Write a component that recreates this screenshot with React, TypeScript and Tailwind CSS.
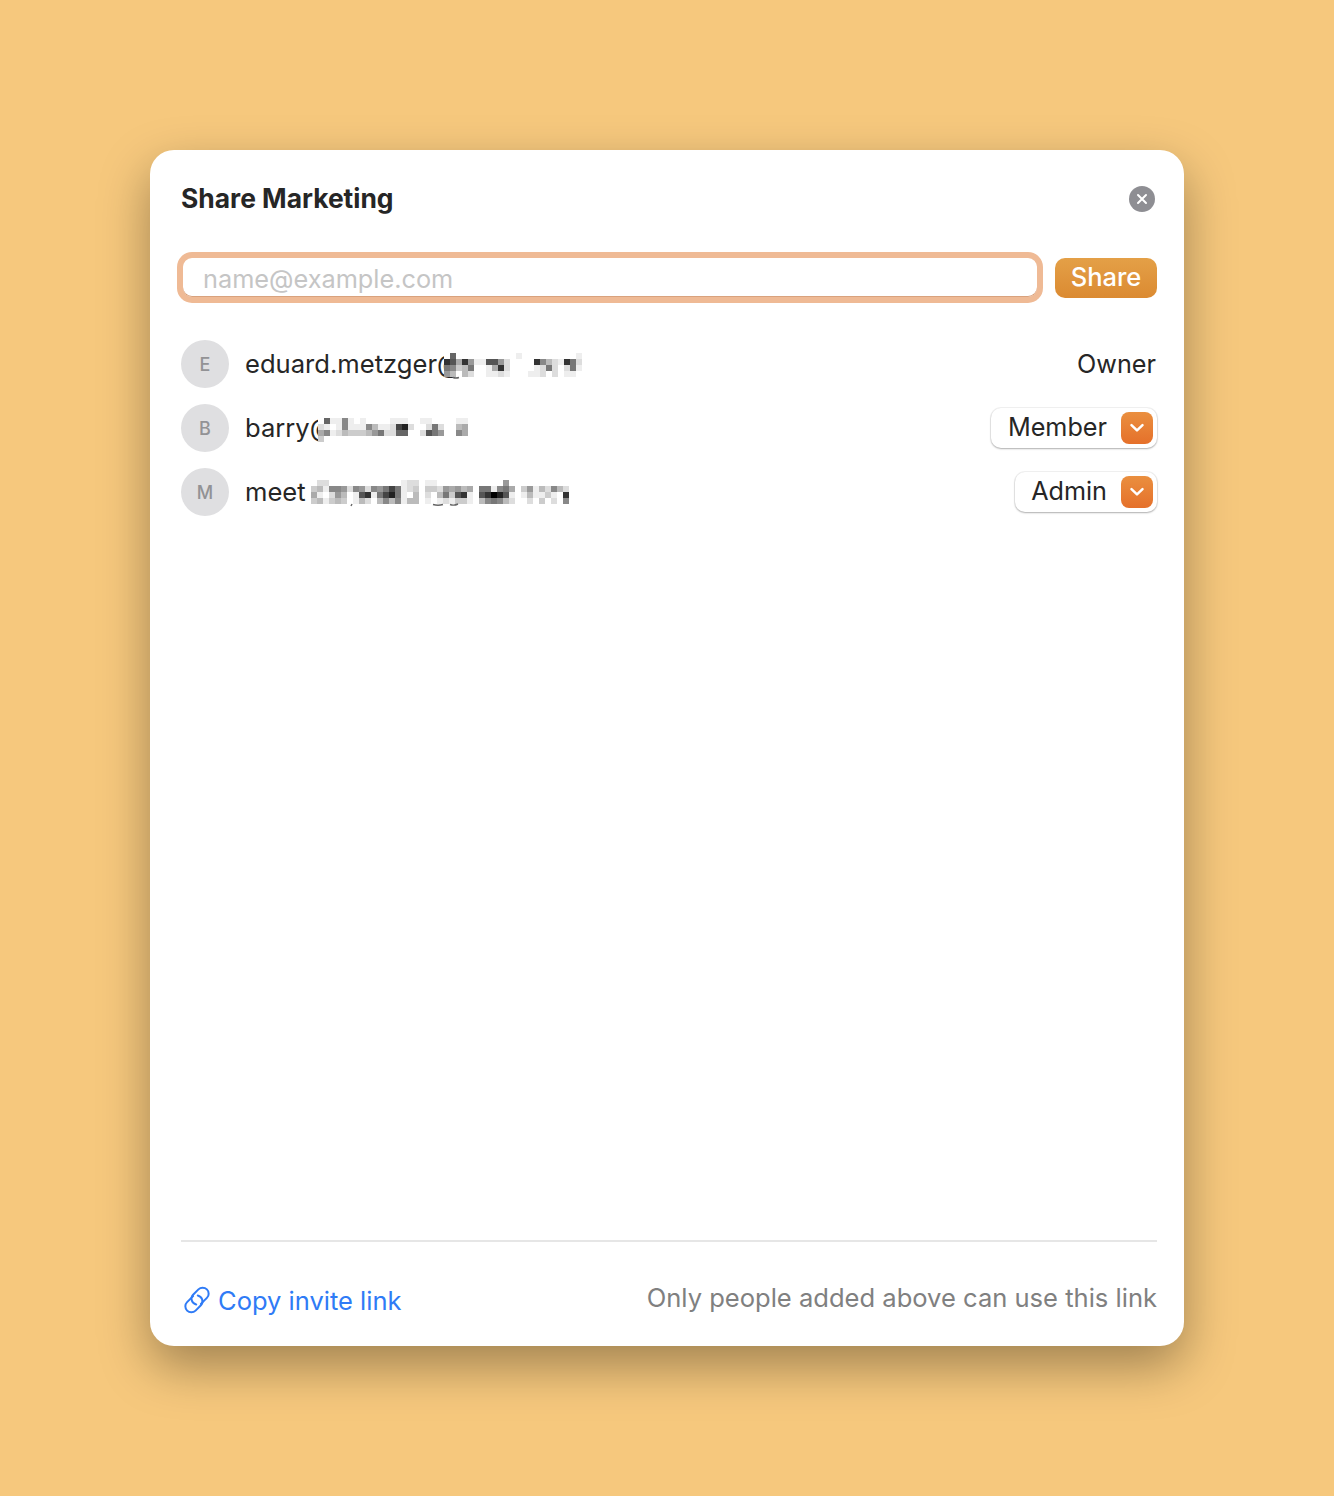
const font = "font-['Inter',sans-serif]";

function Mosaic({ rows, arcs }: { rows: string[]; arcs?: string }) {
  const cols = rows[0].length;
  return (
    <svg width={cols * 6} height={rows.length * 6 + 6} className="overflow-visible" shapeRendering="crispEdges">
      {rows.map((row, y) =>
        row.split("").map((c, x) => {
          const v = parseInt(c, 16) * 17;
          return <rect key={`${x}-${y}`} x={x * 6} y={y * 6} width="6.2" height="6.2" fill={`rgb(${v},${v},${v})`} />;
        }),
      )}
      {arcs ? <path d={arcs} fill="none" stroke="#666" strokeWidth="1.4" shapeRendering="auto" /> : null}
    </svg>
  );
}

function Avatar({ letter }: { letter: string }) {
  return (
    <div className="flex h-12 w-12 shrink-0 items-center justify-center rounded-full bg-[#dfdfe1] text-[18px] font-medium text-[#929295]">
      {letter}
    </div>
  );
}

function Select({ label }: { label: string }) {
  return (
    <div className="flex h-10 items-center rounded-[10px] bg-white pl-[16.6px] pr-[4px] text-[25.2px] text-[#262626] shadow-[0_0_0_1px_rgba(0,0,0,0.05),0_1px_2px_rgba(0,0,0,0.28)]">
      <span>{label}</span>
      <span className="ml-[14px] flex h-8 w-8 items-center justify-center rounded-lg bg-gradient-to-b from-[#ea8f3f] to-[#e5702a]">
        <svg width="16" height="16" viewBox="0 0 16 16" fill="none" stroke="white" strokeWidth="2.5" strokeLinecap="round" strokeLinejoin="round">
          <path d="M2.5 5.2 L8 10.4 L13.5 5.2" />
        </svg>
      </span>
    </div>
  );
}

function Row({
  letter,
  email,
  mosaic,
  children,
}: {
  letter: string;
  email: string;
  mosaic: React.ReactNode;
  children: React.ReactNode;
}) {
  return (
    <div className="relative flex h-16 items-center justify-between">
      <div className="flex items-center gap-4">
        <Avatar letter={letter} />
        <span className="text-[25.6px] text-[#262626]">{email}</span>
      </div>
      {mosaic}
      {children}
    </div>
  );
}

export default function App() {
  return (
    <div className={`${font} flex min-h-[1496px] items-start justify-center bg-[#f6c87d] pt-[150px]`}>
      <div className="flex h-[1196px] w-[1034px] flex-col rounded-[24px] bg-white pl-[31px] pr-[27px] shadow-[0_20px_50px_rgba(0,0,0,0.35)]">
        <div className="flex h-[98px] items-center justify-between pr-[2px]">
          <h1 className="text-[26.4px] font-bold text-[#262626]">Share Marketing</h1>
          <button className="flex h-[26px] w-[26px] items-center justify-center rounded-full bg-[#8e8e93]">
            <svg width="12" height="12" viewBox="0 0 12 12" stroke="white" strokeWidth="2" strokeLinecap="round">
              <path d="M2 2 L10 10 M10 2 L2 10" />
            </svg>
          </button>
        </div>
        <div className="mt-[10px] flex items-start gap-[18px]">
          <input
            placeholder="name@example.com"
            className="ml-[2px] h-[39px] flex-1 rounded-[9px] bg-white pl-[20px] pt-[1px] text-[25.3px] text-[#262626] shadow-[0_0_0_6px_#efba95,inset_0_-1px_0_#d9a27d] outline-none placeholder:text-[#c5c5c5]"
          />
          <button className="flex h-10 w-[102px] items-center justify-center rounded-[10px] bg-gradient-to-b from-[#e4a047] to-[#db8a31] pb-[2px] text-[25.5px] font-medium text-white">
            Share
          </button>
        </div>
        <div className="mt-[34px] flex flex-col">
          <Row
            letter="E"
            email="eduard.metzger@"
            mosaic={
              <div className="absolute left-[263px] top-[21px]">
                <Mosaic
                  arcs="M9 24.5 Q12 25.5 15 24.5"
                  rows={[
                    "f6ffffffffffefffffffffe".slice(0, 23),
                    "35a39ee559dffff38bde37d",
                    "78cb7ffea3dffffed7dfd7e",
                    "9bfbdffeedefffeedfdfeef",
                  ]}
                />
              </div>
            }
          >
            <span className="pl-[2px] pr-[1px] pt-[2px] text-[25.2px] text-[#262626]">Owner</span>
          </Row>
          <Row
            letter="B"
            email="barry@"
            mosaic={
              <div className="absolute left-[137px] top-[22px]">
                <Mosaic
                  rows={[
                    "f6ee8efeffffeeeffeeffffee",
                    "defe8eee8beed42dffd7dffba",
                    "a8edbcccb97dd66ffd579ff8a",
                    "cffffffffffffffffffffffff",
                  ]}
                />
              </div>
            }
          >
            <Select label="Member" />
          </Row>
          <Row
            letter="M"
            email="meet"
            mosaic={
              <div className="absolute left-[130px] top-[20px]">
                <Mosaic
                  arcs="M41 24 L40 26 M122 24.5 Q127 26 132 24.5 M139 24.5 Q143 26 147 24"
                  rows={[
                    "fddffffffffffffeddfeefffffffffff9ffffffffff",
                    "cbe889d89d89747edcfccd9a9baf77e87afc9ebd8bd",
                    "aefd9bfe53e7427efbfdfb7c53ef53025efebeecef3",
                    "cbecbcfebdfb8b8ebbfefedeccefb878bdffdfcfdf8",
                  ]}
                />
              </div>
            }
          >
            <Select label="Admin" />
          </Row>
        </div>
        <div className="mt-auto flex h-[106px] items-center justify-between border-t-2 border-[#e6e6e6] pt-[11px]">
          <a className="flex items-center gap-[7px] pl-[2px] text-[25.5px] text-[#2f7bf6]">
            <svg width="28" height="28" viewBox="0 0 28 28" fill="none" stroke="currentColor" strokeWidth="2" strokeLinecap="round">
              <g transform="rotate(-45 14 14)">
                <path d="M14 19.5 H22.5 a6 6 0 0 0 0-12 H15 a6 6 0 0 0 -4.8 9.2" />
                <path d="M14 8.5 H5.5 a6 6 0 0 0 0 12 H13 a6 6 0 0 0 4.8 -9.2" />
              </g>
            </svg>
            <span className="pt-[3px]">Copy invite link</span>
          </a>
          <span className="-mt-[3px] text-[25.55px] text-[#808080]">Only people added above can use this link</span>
        </div>
      </div>
    </div>
  );
}
